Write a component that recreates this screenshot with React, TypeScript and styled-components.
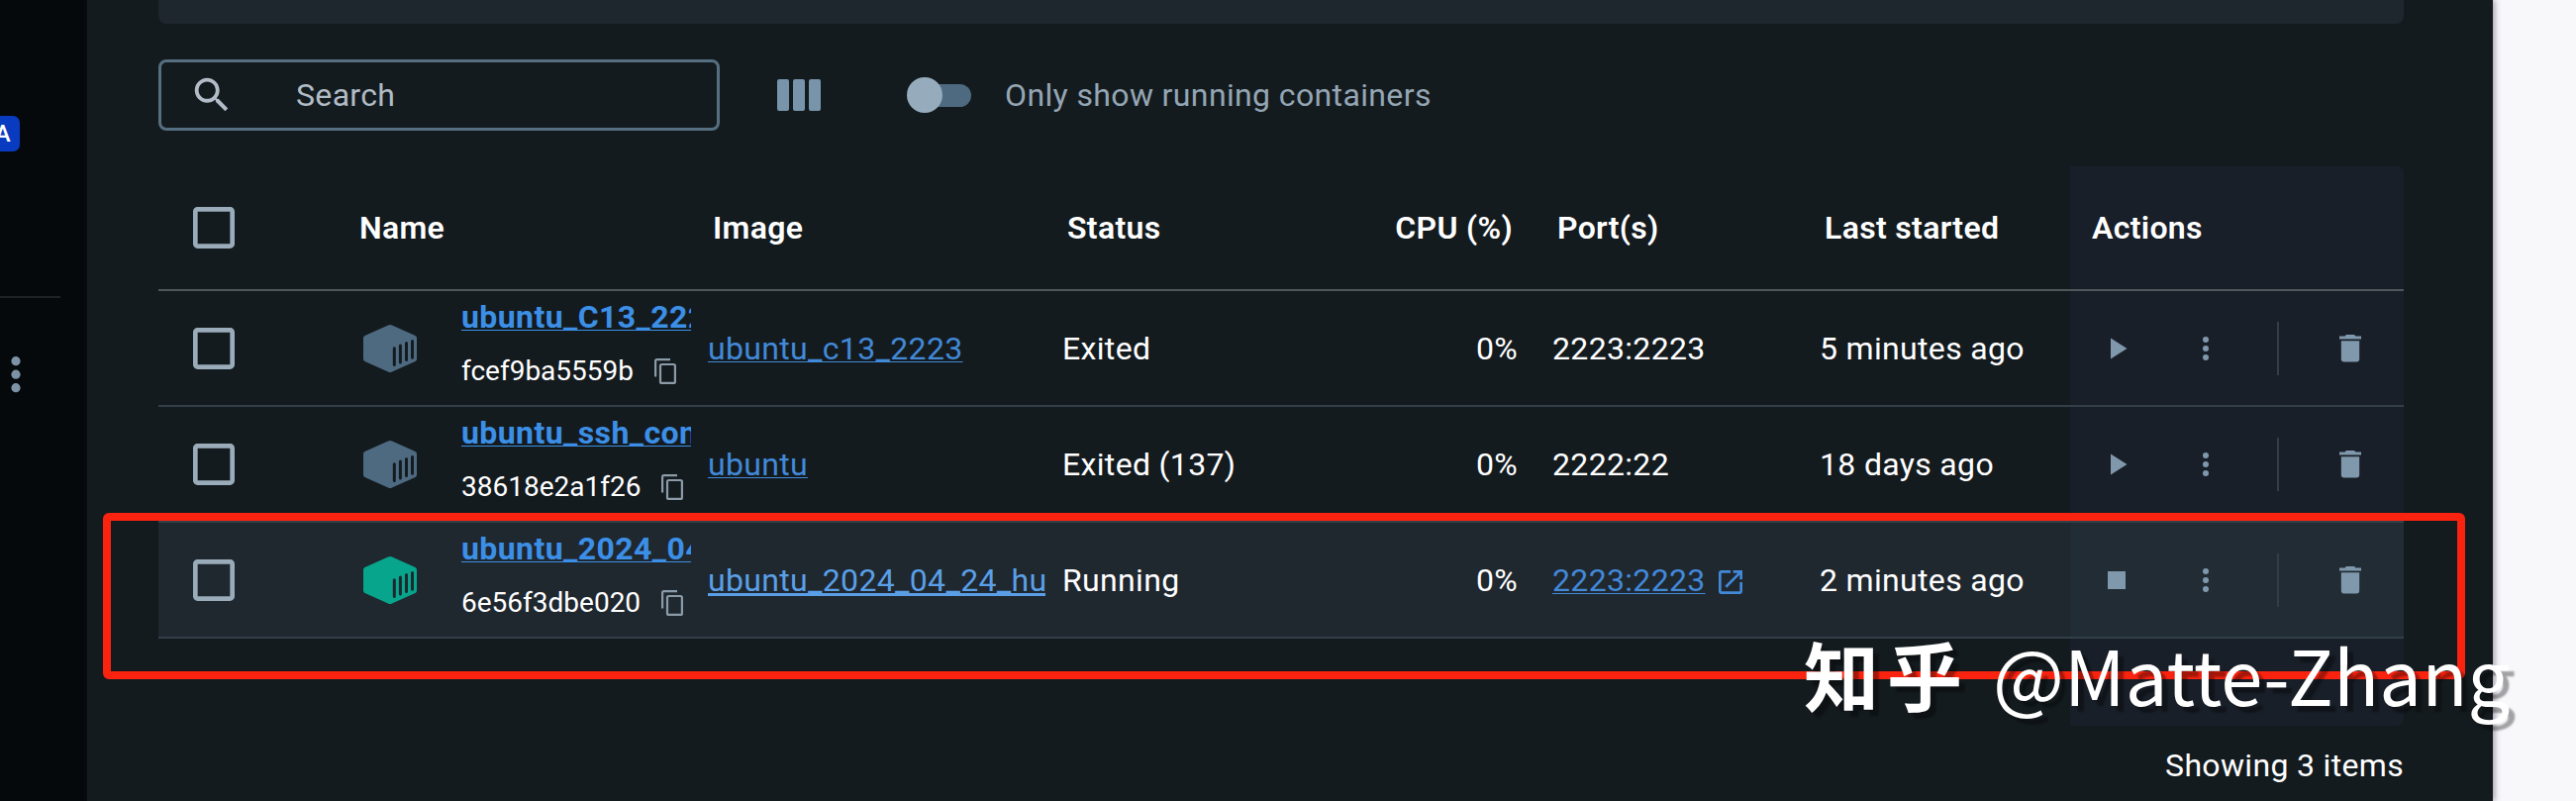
import React from 'react';
import styled, { createGlobalStyle } from 'styled-components';

const Global = createGlobalStyle`
  * { box-sizing: border-box; }
  body { margin: 0; background: #f8f8fb; }
`;

const Screen = styled.div`
  position: relative;
  display: flex;
  width: 2602px;
  height: 809px;
  overflow: hidden;
  background: #f8f8fb;
  font-family: Roboto, 'Liberation Sans', sans-serif;
  font-size: 32px;
  line-height: 40px;
  letter-spacing: 0.33px;
  color: #fff;
`;

const Sidebar = styled.aside`
  width: 88px;
  background: #05090c;
  padding-top: 117px;
  display: flex;
  flex-direction: column;
  align-items: flex-start;
`;

const Badge = styled.div`
  width: 20px;
  height: 36px;
  padding-right: 9px;
  display: flex;
  justify-content: flex-end;
  align-items: center;
  overflow: hidden;
  border-radius: 0 7px 7px 0;
  background: #093bc0;
  font-size: 24px;
  font-weight: 500;
`;

const SidebarRule = styled.div`
  width: 61px;
  height: 2px;
  margin: 146px 0 59px;
  background: #1f2326;
`;

const SidebarMenu = styled.svg`
  width: 32px;
  height: 40px;
  fill: #7d93a5;
`;

const Main = styled.main`
  width: 2430px;
  padding: 0 90px 0 72px;
  background: #141b1f;
  box-shadow: 2px 0 6px rgba(60, 40, 70, 0.45);
`;

const TopPanel = styled.div`
  height: 24px;
  border-radius: 0 0 8px 8px;
  background: #1e272e;
`;

const Toolbar = styled.div`
  display: flex;
  align-items: center;
  height: 72px;
  margin: 36px 0;
`;

const SearchBox = styled.div`
  display: flex;
  align-items: center;
  width: 567px;
  height: 72px;
  padding-left: 28px;
  border: 3px solid #556e80;
  border-radius: 8px;
  color: #b1bcc6;
`;

const SearchIcon = styled.svg`
  width: 46px;
  height: 46px;
  margin-right: 62px;
  fill: #b1bcc6;
`;

const ColumnsIcon = styled.svg`
  width: 44px;
  height: 32px;
  margin: 0 90px 0 58px;
  fill: #7794ab;
`;

const Toggle = styled.div`
  display: flex;
  align-items: center;
  width: 62px;
  height: 23px;
  margin-right: 34px;
  border-radius: 12px;
  background: #4d6a81;
`;

const Thumb = styled.div`
  width: 36px;
  height: 36px;
  margin-left: -3px;
  flex: none;
  border-radius: 50%;
  background: #96abbb;
`;

const ToggleLabel = styled.span`
  color: #94a6b4;
  letter-spacing: 0.37px;
`;

const Table = styled.div`
  display: flex;
  flex-direction: column;
  height: 565px;
  background: linear-gradient(#191f28, #191f28) right / 337px 100% no-repeat;
  border-radius: 8px;
  overflow: hidden;
`;

const gridColumns = '203px 103px 249px 359px 332px 163px 270px 252px 337px';

const HeadRow = styled.div`
  display: grid;
  grid-template-columns: ${gridColumns};
  align-items: center;
  height: 126px;
  border-bottom: 2px solid #50565a;
  font-weight: 600;
`;

const HeadCell = styled.div<{ $left?: number; $span?: number; $right?: number }>`
  grid-column: span ${(p) => p.$span ?? 1};
  padding-left: ${(p) => p.$left ?? 0}px;
  padding-right: ${(p) => p.$right ?? 0}px;
  text-align: ${(p) => (p.$right ? 'right' : 'left')};
  white-space: nowrap;
`;

const Row = styled.div<{ $active?: boolean }>`
  display: grid;
  grid-template-columns: ${gridColumns};
  align-items: center;
  height: 117px;
  border-bottom: 2px solid #333f48;
  background: ${(p) => (p.$active ? 'linear-gradient(90deg, #1f272f 1931px, #212c35 1931px)' : 'transparent')};
`;

const CheckIcon = styled.svg`
  display: block;
  width: 56px;
  height: 56px;
  margin-left: 28px;
  fill: #9aacba;
`;

const CubeIcon = styled.svg`
  display: block;
  width: 54px;
  height: 48px;
  margin-left: 4px;
`;

const NameCell = styled.div`
  display: flex;
  flex-direction: column;
  width: 232px;
  height: 115px;
`;

const NameLink = styled.a`
  height: 46px;
  padding-top: 6px;
  overflow: hidden;
  white-space: nowrap;
  color: #3c8fe6;
  font-weight: 700;
  letter-spacing: 0.42px;
  text-decoration: underline;
  text-decoration-thickness: 1px;
  text-underline-offset: 2px;
`;

const IdLine = styled.div`
  display: flex;
  align-items: center;
  gap: 21px;
  height: 44px;
  margin-top: 13px;
  font-size: 28px;
  letter-spacing: 0;
`;

const CopyIcon = styled.svg`
  width: 22px;
  height: 26px;
  fill: none;
  stroke: #8b9ba8;
  stroke-width: 2.2;
`;

const Cell = styled.div<{ $right?: boolean }>`
  white-space: nowrap;
  text-align: ${(p) => (p.$right ? 'right' : 'left')};
  padding-right: ${(p) => (p.$right ? 36 : 0)}px;
  margin-left: -1px;
`;

const ImageLink = styled.a<{ $hover?: boolean }>`
  display: block;
  width: ${(p) => (p.$hover ? '341px' : 'auto')};
  overflow: hidden;
  white-space: nowrap;
  color: ${(p) => (p.$hover ? '#5a9fe6' : '#4289d8')};
  text-decoration: underline;
  text-decoration-thickness: ${(p) => (p.$hover ? 3 : 1)}px;
  text-underline-offset: 2px;
`;

const PortLink = styled.a`
  display: flex;
  align-items: center;
  gap: 13px;
  color: #4289d8;
  span {
    text-decoration: underline;
    text-decoration-thickness: 1px;
    text-underline-offset: 2px;
  }
`;

const ExternalIcon = styled.svg`
  width: 32px;
  height: 32px;
  margin: 4px 0 0 -4px;
  fill: #4289d8;
`;

const Actions = styled.div`
  display: flex;
  align-items: center;
  padding-left: 37px;
`;

const ActionIcon = styled.svg<{ $gap: number }>`
  width: 24px;
  height: 32px;
  margin-right: ${(p) => p.$gap}px;
  fill: #7f98ac;
`;

const Divider = styled.div`
  width: 2px;
  height: 54px;
  margin-right: 60px;
  background: #343c46;
`;

const Footer = styled.div`
  margin-top: 20px;
  text-align: right;
`;

const Highlight = styled.div`
  position: absolute;
  left: 104px;
  top: 518px;
  width: 2386px;
  height: 168px;
  border: 8px solid #f9230f;
  border-radius: 6px;
`;

const Watermark = styled.div`
  position: absolute;
  left: 1822px;
  top: 625px;
  display: flex;
  align-items: baseline;
  height: 110px;
  line-height: 110px;
  font-family: 'Noto Sans CJK SC', sans-serif;
  font-size: 76px;
  letter-spacing: 0.1px;
  white-space: nowrap;
  text-shadow: 6px 6px 2px rgba(0, 0, 0, 0.35);
`;

const WatermarkLogo = styled.span`
  width: 191px;
  font-size: 76px;
  font-weight: 700;
  letter-spacing: 8px;
`;

const Checkbox = () => (
  <CheckIcon viewBox="0 0 24 24">
    <path d="M19 5v14H5V5h14m0-2H5c-1.1 0-2 .9-2 2v14c0 1.1.9 2 2 2h14c1.1 0 2-.9 2-2V5c0-1.1-.9-2-2-2z" />
  </CheckIcon>
);

const Cube = ({ color, slot }: { color: string; slot: string }) => (
  <CubeIcon viewBox="0 0 54 48">
    <path d="M25 .6Q27 -.5 29 .6L52.500 11Q54 11.800 54 13.500V34.500Q54 36.200 52.500 37L29 47.400Q27 48.500 25 47.400L1.500 37Q0 36.200 0 34.500V13.500Q0 11.800 1.500 11Z" fill={color} />
    <path d="M31.300 23.700V40.500M37.400 21.100V38M43.500 18.600V35.500M49.500 16.500V33.300" stroke={slot} strokeWidth="3" strokeLinecap="round" />
  </CubeIcon>
);

type Container = {
  name: string;
  id: string;
  image: string;
  status: string;
  port: string;
  started: string;
  running?: boolean;
};

const containers: Container[] = [
  { name: 'ubuntu_C13_2223', id: 'fcef9ba5559b', image: 'ubuntu_c13_2223', status: 'Exited', port: '2223:2223', started: '5 minutes ago' },
  { name: 'ubuntu_ssh_con', id: '38618e2a1f26', image: 'ubuntu', status: 'Exited (137)', port: '2222:22', started: '18 days ago' },
  { name: 'ubuntu_2024_04', id: '6e56f3dbe020', image: 'ubuntu_2024_04_24_hu', status: 'Running', port: '2223:2223', started: '2 minutes ago', running: true },
];

const ContainerRow = ({ c }: { c: Container }) => (
  <Row $active={c.running}>
    <Checkbox />
    <Cube color={c.running ? '#06a58c' : '#4e6a80'} slot={c.running ? '#1f272f' : '#141b1f'} />
    <NameCell>
      <NameLink>{c.name}</NameLink>
      <IdLine>
        {c.id}
        <CopyIcon viewBox="0 0 22 26">
          <path d="M1.100 18.500V2.600Q1.100 1.100 2.600 1.100H16" />
          <rect x="6" y="6" width="14.900" height="18.900" rx="1.500" />
        </CopyIcon>
      </IdLine>
    </NameCell>
    <ImageLink $hover={c.running}>{c.image}</ImageLink>
    <Cell>{c.status}</Cell>
    <Cell $right>0%</Cell>
    <Cell>
      {c.running ? (
        <PortLink>
          <span>{c.port}</span>
          <ExternalIcon viewBox="0 0 24 24">
            <path d="M19 19H5V5h7V3H5c-1.110 0-2 .9-2 2v14c0 1.100.89 2 2 2h14c1.100 0 2-.9 2-2v-7h-2v7zM14 3v2h3.590l-9.830 9.830 1.410 1.410L19 6.410V10h2V3h-7z" />
          </ExternalIcon>
        </PortLink>
      ) : (
        c.port
      )}
    </Cell>
    <Cell>{c.started}</Cell>
    <Actions>
      <ActionIcon $gap={64} viewBox="0 0 24 32">
        {c.running ? <rect x="1" y="7" width="18" height="18" /> : <path d="M4 5.500V26.500L20.500 16Z" />}
      </ActionIcon>
      <ActionIcon $gap={60} viewBox="0 0 24 32">
        <circle cx="12" cy="7" r="3" />
        <circle cx="12" cy="16" r="3" />
        <circle cx="12" cy="25" r="3" />
      </ActionIcon>
      <Divider />
      <ActionIcon $gap={0} viewBox="0 0 24 32">
        <path d="M1 3.500H6.500L8 2H16L17.500 3.500H23V6.500H1ZM2.800 8.200H21.200V26.500Q21.200 29.500 18.200 29.500H5.800Q2.800 29.500 2.800 26.500Z" />
      </ActionIcon>
    </Actions>
  </Row>
);

export default function App() {
  return (
    <Screen>
      <Global />
      <Sidebar>
        <Badge>A</Badge>
        <SidebarRule />
        <SidebarMenu viewBox="0 0 32 40">
          <circle cx="16" cy="4.700" r="4.600" />
          <circle cx="16" cy="18.200" r="4.600" />
          <circle cx="16" cy="31.700" r="4.600" />
        </SidebarMenu>
      </Sidebar>
      <Main>
        <TopPanel />
        <Toolbar>
          <SearchBox>
            <SearchIcon viewBox="0 0 24 24">
              <path d="M15.500 14h-.79l-.28-.27C15.410 12.590 16 11.110 16 9.500 16 5.910 13.090 3 9.500 3S3 5.910 3 9.500 5.910 16 9.500 16c1.610 0 3.090-.59 4.230-1.570l.27.28v.79l5 4.990L20.490 19l-4.990-5zm-6 0C7.010 14 5 11.990 5 9.500S7.010 5 9.500 5 14 7.010 14 9.500 11.990 14 9.500 14z" />
            </SearchIcon>
            Search
          </SearchBox>
          <ColumnsIcon viewBox="0 0 44 32">
            <rect width="12" height="32" rx="2" />
            <rect x="16" width="12" height="32" rx="2" />
            <rect x="32" width="12" height="32" rx="2" />
          </ColumnsIcon>
          <Toggle>
            <Thumb />
          </Toggle>
          <ToggleLabel>Only show running containers</ToggleLabel>
        </Toolbar>
        <Table>
          <HeadRow>
            <Checkbox />
            <HeadCell $span={2}>Name</HeadCell>
            <HeadCell $left={5}>Image</HeadCell>
            <HeadCell $left={4}>Status</HeadCell>
            <HeadCell $right={41}>CPU (%)</HeadCell>
            <HeadCell $left={4}>Port(s)</HeadCell>
            <HeadCell $left={4}>Last started</HeadCell>
            <HeadCell $left={22}>Actions</HeadCell>
          </HeadRow>
          {containers.map((c) => (
            <ContainerRow key={c.id} c={c} />
          ))}
        </Table>
        <Footer>Showing 3 items</Footer>
      </Main>
      <Highlight />
      <Watermark>
        <WatermarkLogo>知乎</WatermarkLogo>
        <span>@Matte-Zhang</span>
      </Watermark>
    </Screen>
  );
}
